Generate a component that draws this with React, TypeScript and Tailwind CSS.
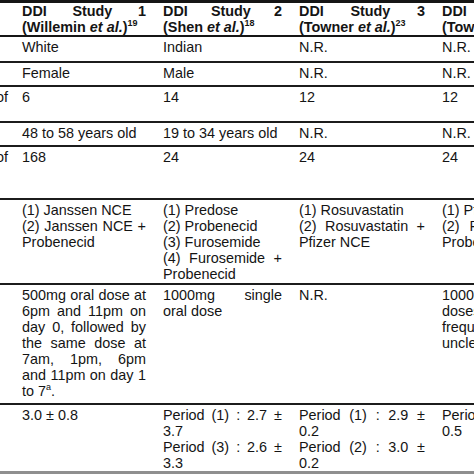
import type { ReactNode } from 'react';

type Line = { c: ReactNode; j?: boolean };
type Row = { h: string; pt: string; cells: Line[][]; last?: boolean };

const J = (c: ReactNode): Line => ({ c, j: true });
const L = (c: ReactNode): Line => ({ c });

const Sup = ({ children }: { children: ReactNode }) => (
  <span className="text-[9px] leading-none font-bold [vertical-align:6px]">{children}</span>
);

const head = (name: string, n: string, ref: string): Line[] => [
  J(`DDI Study ${n}`),
  L(
    <>
      ({name} <i>et al.</i>)<Sup>{ref}</Sup>
    </>
  ),
];

const rows: Row[] = [
  {
    h: 'h-[26px]',
    pt: 'pt-[2px]',
    cells: [[], [L('White')], [L('Indian')], [L('N.R.')], [L('N.R.')]],
  },
  {
    h: 'h-[24px]',
    pt: 'pt-[2px]',
    cells: [[], [L('Female')], [L('Male')], [L('N.R.')], [L('N.R.')]],
  },
  {
    h: 'h-[36px]',
    pt: 'pt-[2px]',
    cells: [[L('Number of')], [L('6')], [L('14')], [L('12')], [L('12')]],
  },
  {
    h: 'h-[24px]',
    pt: 'pt-[2px]',
    cells: [[], [L('48 to 58 years old')], [L('19 to 34 years old')], [L('N.R.')], [L('N.R.')]],
  },
  {
    h: 'h-[53px]',
    pt: 'pt-[2px]',
    cells: [[L('Duration of')], [L('168')], [L('24')], [L('24')], [L('24')]],
  },
  {
    h: 'h-[85px]',
    pt: 'pt-[2px]',
    cells: [
      [],
      [L('(1) Janssen NCE'), J('(2) Janssen NCE +'), L('Probenecid')],
      [L('(1) Predose'), L('(2) Probenecid'), L('(3) Furosemide'), J('(4) Furosemide +'), L('Probenecid')],
      [L('(1) Rosuvastatin'), J('(2) Rosuvastatin +'), L('Pfizer NCE')],
      [L('(1) Pfizer NCE'), J('(2) Pfizer NCE +'), L('Probenecid')],
    ],
  },
  {
    h: 'h-[120px]',
    pt: 'pt-[2px]',
    cells: [
      [],
      [
        J('500mg oral dose at'),
        J('6pm and 11pm on'),
        J('day 0, followed by'),
        J('the same dose at'),
        J('7am, 1pm, 6pm'),
        J('and 11pm on day 1'),
        L(
          <>
            to 7<span className="text-[9px] leading-none [vertical-align:6px]">a</span>.
          </>
        ),
      ],
      [J('1000mg single'), L('oral dose')],
      [L('N.R.')],
      [J('1000mg multiple'), J('doses, dosing'), L('frequency'), L('unclear')],
    ],
  },
  {
    h: 'h-[69px]',
    pt: 'pt-[2px]',
    last: true,
    cells: [
      [],
      [L('3.0 ± 0.8')],
      [J('Period (1) : 2.7 ±'), L('3.7'), J('Period (3) : 2.6 ±'), L('3.3')],
      [J('Period (1) : 2.9 ±'), L('0.2'), J('Period (2) : 3.0 ±'), L('0.2')],
      [J('Period (1) : 2.8 ±'), L('0.5')],
    ],
  },
];

function Cell({ lines, first }: { lines: Line[]; first?: boolean }) {
  return (
    <div className={first ? 'pr-[7px] text-right' : 'pl-[7px] pr-[10px]'}>
      {lines.map((ln, i) => (
        <div
          key={i}
          className={
            'whitespace-nowrap ' + (ln.j ? 'text-justify [text-align-last:justify]' : '')
          }
        >
          {ln.c}
        </div>
      ))}
    </div>
  );
}

export default function App() {
  const cols = 'grid grid-cols-[95px_141px_136px_143px_140px]';

  return (
    <div className="w-[474px] h-[474px] overflow-hidden bg-white text-[#141414] text-[14.4px] leading-[16px] font-['Liberation_Sans',Arial,sans-serif]">
      <div className="-ml-[80px] w-[655px]">
        {/* Header */}
        <div className={`${cols} h-[37px] border-t-[3px] border-b-2 border-[#151515] font-bold`}>
          <Cell lines={[]} first />
          <Cell lines={head('Willemin', '1', '19')} />
          <Cell lines={head('Shen', '2', '18')} />
          <Cell lines={head('Towner', '3', '23')} />
          <Cell lines={head('Towner', '4', '23')} />
        </div>

        {rows.map((row, r) => (
          <div
            key={r}
            className={`${cols} ${row.h} ${row.pt} ${
              row.last ? 'border-b-[3px] border-[#8f8f8f]' : 'border-b-2 border-[#1c1c1c]'
            }`}
          >
            {row.cells.map((lines, c) => (
              <Cell key={c} lines={lines} first={c === 0} />
            ))}
          </div>
        ))}
      </div>
    </div>
  );
}
